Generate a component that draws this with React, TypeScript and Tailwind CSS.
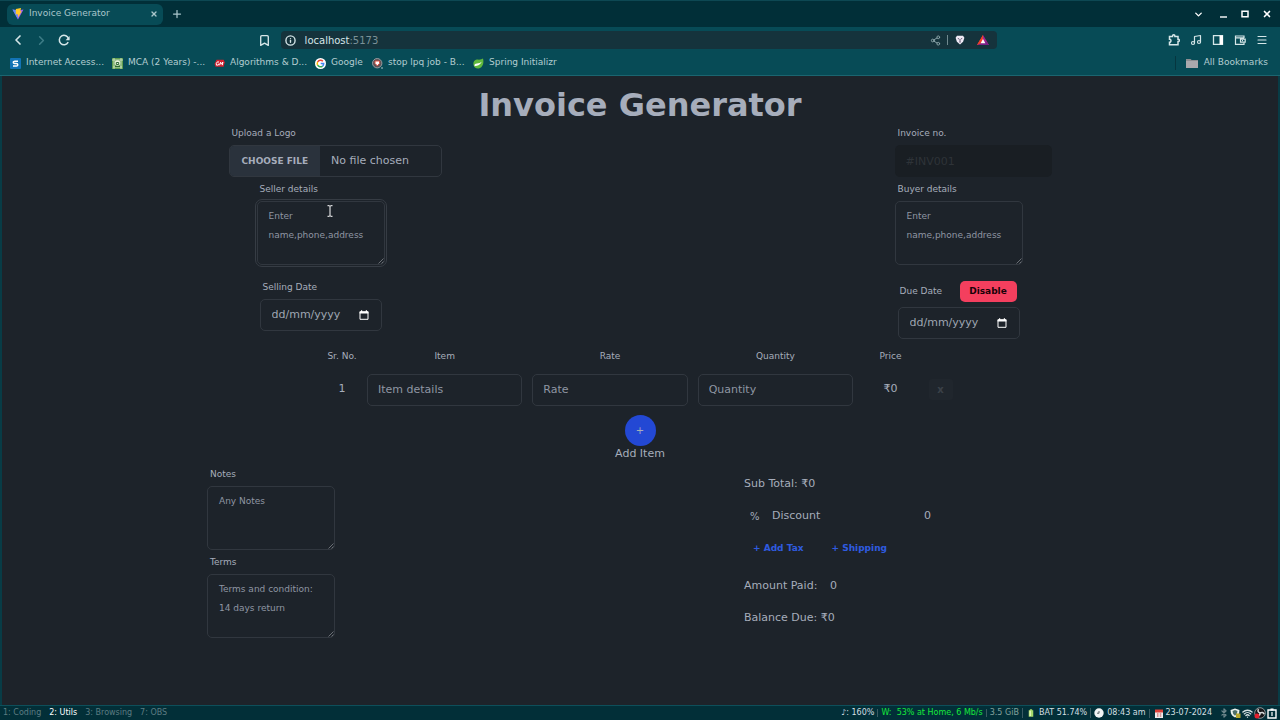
import type { ReactNode } from 'react'
import clsx from 'clsx'
import {
  Bluetooth,
  Bookmark,
  ChevronDown,
  ChevronLeft,
  ChevronRight,
  Info,
  Menu,
  Music,
  Plus,
  Share2,
  Wifi,
  X,
} from 'lucide-react'

const fieldBorder = 'rounded-[5px] border border-[#31373f]'

export default function App() {
  return (
    <div className="flex min-h-screen flex-col bg-[#1d232a] font-['DejaVu_Sans','Noto_Sans',sans-serif] text-[11px] text-[#a6adbb]">
      <TabStrip />
      <Toolbar />
      <Bookmarks />
      <main className="relative flex-1 border-x-2 border-[#083c46] pt-[13px]">
        <h1 className="text-center text-[32px] leading-8 font-bold">Invoice Generator</h1>
        <Details />
        <Items />
        <Summary />
        <TextCursor />
      </main>
      <StatusBar />
    </div>
  )
}

const TabStrip = () => (
  <div className="flex h-[27px] items-center border-t border-[#0d4853] bg-[#012f38] px-[7px] text-[9px] text-[#a9c6cb]">
    <div className="flex h-[21px] w-[156px] items-center rounded-md bg-[#074b56] px-[5px]">
      <ViteLogo />
      <span className="ml-[5px] flex-1">Invoice Generator</span>
      <button aria-label="Close tab">
        <X size={8} strokeWidth={4} />
      </button>
    </div>
    <button aria-label="New tab" className="ml-2">
      <Plus size={12} strokeWidth={2.5} />
    </button>
    <div className="ml-auto flex items-center gap-3 text-white">
      <button aria-label="Search tabs" className="mr-0.5">
        <ChevronDown size={11} strokeWidth={3} />
      </button>
      <button aria-label="Minimize">
        <svg viewBox="0 0 10 10" className="size-2.5">
          <path d="M2 8h7" stroke="currentColor" strokeWidth="1.4" />
        </svg>
      </button>
      <button aria-label="Maximize">
        <svg viewBox="0 0 10 10" className="size-2.5">
          <path d="M2 2.2h6v5.6h-6z" fill="none" stroke="currentColor" strokeWidth="1.5" />
        </svg>
      </button>
      <button aria-label="Close window" className="mr-px">
        <X size={10} strokeWidth={4} />
      </button>
    </div>
  </div>
)

const Toolbar = () => (
  <div className="flex h-[26px] items-center bg-[#074b56] text-[#d5e6e8]">
    <div className="flex flex-1 items-center gap-2 pl-2.5">
      <button aria-label="Back">
        <ChevronLeft size={16} strokeWidth={2.5} />
      </button>
      <button aria-label="Forward" className="text-[#3d7c86]">
        <ChevronRight size={15} strokeWidth={2.5} />
      </button>
      <button aria-label="Reload">
        <svg viewBox="0 0 14 14" className="size-3.5" fill="none" stroke="currentColor" strokeWidth="1.5">
          <path d="M11.2 9.2A4.7 4.7 0 1 1 11.6 6" />
          <path d="M12.6 3v4.2H8.6z" fill="currentColor" stroke="none" />
        </svg>
      </button>
      <button aria-label="Bookmark this page" className="mr-2.5 ml-auto">
        <Bookmark size={13} strokeWidth={2.5} />
      </button>
    </div>
    <div className="flex h-[18px] w-[56%] items-center rounded-sm bg-[#15333c] px-1">
      <Info size={11} strokeWidth={3} />
      <span className="ml-[9px] flex-1 text-[10px]">
        localhost<span className="text-[#7b9197]">:5173</span>
      </span>
      <Share2 size={11} className="text-[#8fa9ad]" />
      <span className="mx-1.5 h-2.5 w-px bg-[#70898f]" />
      <svg viewBox="0 0 10 10" className="mr-1 ml-px size-2.5">
        <path d="M2 .8h6l1.4 2-1.3 4L5 9.6 1.9 6.8.6 2.8z" fill="#eee9f5" />
        <path d="M2.8 3.4l1.4.6M7.2 3.4L5.8 4M5 4v2M4 6.5l1 .8 1-.8" stroke="#534763" strokeWidth=".9" fill="none" />
      </svg>
      <svg viewBox="0 0 12 10" className="mr-1 ml-2 h-2.5 w-3">
        <path d="M6 0L0 10h6V5z" fill="#ff4724" />
        <path d="M6 0l6 10H6V5z" fill="#a3268f" />
        <path d="M0 10h12L9 6.500H3z" fill="#7a2087" />
        <path d="M6 0L0 10l3.600-1.500L6 4z" fill="#f0402b" />
        <path d="M6 4L3.600 8.300h4.800z" fill="#fff" />
      </svg>
    </div>
    <div className="flex flex-1 items-center justify-end gap-2.5 pr-3">
      <button aria-label="Extensions">
        <svg viewBox="0 0 12 12" className="size-3" fill="none" stroke="currentColor" strokeWidth="1.5">
          <path d="M1.500 2.500h3V2a1.200 1.200 0 0 1 2.400 0v.5H10v2.800h.3a1.100 1.100 0 0 1 0 2.200H10v3.300H1.500V8.300a1.500 1.500 0 0 0 0-3z" />
        </svg>
      </button>
      <button aria-label="Media controls">
        <Music size={12} strokeWidth={2.4} />
      </button>
      <button aria-label="Side panel">
        <svg viewBox="0 0 12 12" className="size-3">
          <path d="M1.500 1.700h9v8.600h-9z" fill="none" stroke="currentColor" strokeWidth="1.300" />
          <path d="M7.500 1.500h3.500v9H7.500z" fill="#fff" />
        </svg>
      </button>
      <button aria-label="Wallet">
        <svg viewBox="0 0 12 12" className="size-3" fill="none" stroke="currentColor" strokeWidth="1.200">
          <path d="M10 4V2H1.500v8.300H10V8.500" />
          <path d="M1.500 3.800H10M6.500 5.200h4.700v3H6.500z" />
          <path d="M8 6.700h1" />
        </svg>
      </button>
      <button aria-label="Menu">
        <Menu size={12} strokeWidth={2.2} />
      </button>
    </div>
  </div>
)

const Bookmarks = () => (
  <nav className="flex h-[23px] items-center border-b border-[#1b6570] bg-[#074b56] pb-0.5 pl-2.5 text-[9px] whitespace-nowrap text-[#b3cdd1]">
    <BookmarkLink className="w-[102px]" label="Internet Access...">
      <rect width="11" height="11" rx="1" fill="#1273b5" />
      <path d="M8 3.200H4.800Q3.300 3.200 3.300 4.400T4.800 5.500h1.500Q7.800 5.500 7.800 6.800T6.300 8H3" fill="none" stroke="#fff" strokeWidth="1.400" />
    </BookmarkLink>
    <BookmarkLink className="w-[102px]" label="MCA (2 Years) -...">
      <rect width="11" height="11" fill="#5f9d4f" />
      <path d="M0 2h11M1 9h9M2 0v11M9 0v11" stroke="#dcebd0" strokeWidth=".8" />
      <circle cx="5.500" cy="5" r="2.800" fill="#e9f1dc" />
      <path d="M3 8.500h5M4.300 4.500h2.400v2H4.300z" fill="none" stroke="#2d6a34" strokeWidth="1" />
    </BookmarkLink>
    <BookmarkLink className="w-[101px]" label="Algorithms & D...">
      <path d="M2.500 1.800h7.200l1 2.500-1 4.500H1.500L.5 6z" fill="#d2202f" />
      <path d="M5 4Q3 3 2.300 5.500T4.500 7L5 5.500M5.600 7.200l1-3 .7 2 1.600-2.200-.6 3.200" fill="none" stroke="#fff" strokeWidth="1" />
    </BookmarkLink>
    <BookmarkLink className="w-[57px]" label="Google">
      <circle cx="5.500" cy="5.500" r="5.500" fill="#fff" />
      <g fill="none" strokeWidth="1.500">
        <path d="M7.900 3.200A3.300 3.300 0 0 0 2.600 4" stroke="#ea4335" />
        <path d="M2.600 4a3.300 3.300 0 0 0 0 3.100" stroke="#fbbc05" />
        <path d="M2.600 7.100a3.300 3.300 0 0 0 5 1" stroke="#34a853" />
        <path d="M7.600 8.100a3.300 3.300 0 0 0 1.100-2.500h-3" stroke="#4285f4" />
      </g>
    </BookmarkLink>
    <BookmarkLink className="w-[101px]" label="stop lpq job - B...">
      <circle cx="5.200" cy="5.200" r="4.700" fill="#5b5358" stroke="#a0a2a6" strokeWidth=".9" />
      <path d="M3 3h4.600v2.300L5.300 8 3 5.300z" fill="#fff" stroke="#d94c3c" strokeWidth="1" />
      <circle cx="10" cy="10" r=".8" fill="#c7d5d8" />
    </BookmarkLink>
    <BookmarkLink label="Spring Initializr">
      <path d="M10 .5Q8.500 1.800 5 1.600C1.500 1.600.2 4 .4 6.500.6 9 2.800 10.700 5.500 10.500 9 10.300 11.400 6 10 .5z" fill="#5fb83c" />
      <path d="M1.600 8.200Q6.800 8 8.800 3.800 7 5.400 4 5.600T1.600 8.200z" fill="#fff" />
    </BookmarkLink>
    <a href="#" className="ml-auto flex items-center gap-1.5 border-l border-[#06363f] pr-3 pl-2.5">
      <svg viewBox="0 0 12 10" className="h-2.5 w-3">
        <path d="M0 1h4.500l1.200 1H12v8H0z" fill="#8c8d91" />
        <path d="M0 3h12v7H0z" fill="#aaa9ad" />
      </svg>
      All Bookmarks
    </a>
  </nav>
)

const BookmarkLink = (props: { label: string; className?: string; children: ReactNode }) => (
  <a href="#" className={clsx('flex shrink-0 items-center gap-[5px]', props.className)}>
    <svg viewBox="0 0 11 11" className="size-[11px] shrink-0">
      {props.children}
    </svg>
    {props.label}
  </a>
)

const ViteLogo = () => (
  <svg viewBox="0 0 12 12" className="size-3">
    <path d="M.5 1.500L6 11.500l5.500-10L6 2.500z" fill="#a45df0" />
    <path d="M.5 1.500L6 11.500 5 2.300z" fill="#5f8df5" />
    <path d="M3.800 1L9 0 8.400 3.200h1.300L6 9.500 5.700 6 3.800 6.500z" fill="#ffc928" />
  </svg>
)

const Label = (props: { htmlFor: string; className?: string; children: ReactNode }) => (
  <label htmlFor={props.htmlFor} className={clsx('my-1 block h-4 px-[3px] text-[9px] leading-4', props.className)}>
    {props.children}
  </label>
)

const TextArea = (props: { id: string; placeholder: string; focused?: boolean }) => (
  <div className="relative h-16 w-32">
    <textarea
      id={props.id}
      placeholder={props.placeholder}
      className={clsx(
        'block size-full resize-none px-[11px] py-[5px] text-[9px] leading-[19px] outline-[#363c44] placeholder:text-[#8f96a3]',
        fieldBorder,
        props.focused && 'outline-1 outline-offset-1',
      )}
    />
    <svg viewBox="0 0 6 6" className="absolute right-px bottom-px size-1.5 text-[#8c9096]">
      <path d="M.5 5.500l5-5M3.500 5.500l2-2" stroke="currentColor" strokeWidth=".7" />
    </svg>
  </div>
)

const DateField = ({ id }: { id: string }) => (
  <div className={clsx('ml-[3px] flex h-8 w-[122px] items-center px-[11px]', fieldBorder)}>
    <input id={id} type="text" placeholder="dd/mm/yyyy" className="w-0 flex-1 outline-none placeholder:text-[#9fa6b3]" />
    <button aria-label="Open calendar" className="mr-px text-white">
      <svg viewBox="0 0 10 10" className="size-2.5">
        <path d="M1 1.800h8v7.500H1z" fill="none" stroke="currentColor" strokeWidth="1" />
        <path d="M.6 1.500h8.800v2H.6zM2 .3h1.200v1.500H2zM6.800.3H8v1.500H6.800z" fill="currentColor" />
      </svg>
    </button>
  </div>
)

const Details = () => (
  <div className="mx-auto flex w-full max-w-[823px] justify-between">
    <section>
      <Label htmlFor="logo">Upload a Logo</Label>
      <input
        id="logo"
        type="file"
        className={clsx(
          'block h-8 w-[213px] overflow-hidden leading-[30px] file:mr-[11px] file:h-full file:bg-[#2a323c] file:px-3 file:text-[9px] file:font-bold file:uppercase',
          fieldBorder,
        )}
      />
      <div className="ml-7">
        <Label htmlFor="seller">Seller details</Label>
        <TextArea id="seller" placeholder="Enter name,phone,address" focused />
        <Label htmlFor="selling-date" className="mt-3.5 ml-[3px]">
          Selling Date
        </Label>
        <DateField id="selling-date" />
      </div>
    </section>
    <section className="w-[157px]">
      <Label htmlFor="invoice-no">Invoice no.</Label>
      <input
        id="invoice-no"
        disabled
        placeholder="#INV001"
        className="block h-8 w-full rounded-[5px] bg-[#191e23] px-[11px] placeholder:text-[#2e3338]"
      />
      <Label htmlFor="buyer">Buyer details</Label>
      <TextArea id="buyer" placeholder="Enter name,phone,address" />
      <div className="mt-4 mb-[5px] flex w-[122px] items-center justify-between pl-[5px] text-[9px]">
        <label htmlFor="due-date">Due Date</label>
        <button className="h-[21px] w-[57px] rounded-[5px] bg-[#f43f5e] font-bold text-[#190208]">Disable</button>
      </div>
      <DateField id="due-date" />
    </section>
  </div>
)

const columns = ['Item', 'Rate', 'Quantity']
const placeholders = ['Item details', 'Rate', 'Quantity']

const Items = () => (
  <div className="mt-1.5 flex flex-col items-center">
    <table className="w-[636px] table-fixed text-center">
      <thead className="h-[23px] text-[9px]">
        <tr>
          <th className="w-10 font-normal whitespace-nowrap">Sr. No.</th>
          {columns.map((column) => (
            <th key={column} className="font-normal">
              {column}
            </th>
          ))}
          <th className="w-[65px] font-normal">Price</th>
          <th className="w-[35px]" aria-label="Remove" />
        </tr>
      </thead>
      <tbody>
        <tr className="h-[43px]">
          <td>1</td>
          {placeholders.map((placeholder) => (
            <td key={placeholder} className="px-[5px]">
              <input
                aria-label={placeholder}
                placeholder={placeholder}
                className={clsx('block h-8 w-full px-2.5 placeholder:text-[#8f96a3]', fieldBorder)}
              />
            </td>
          ))}
          <td>₹0</td>
          <td>
            <button disabled className="h-[21px] w-6 rounded-[3px] bg-[#20262d] text-[10px] font-bold text-[#3b4148]">
              x
            </button>
          </td>
        </tr>
      </tbody>
    </table>
    <button id="add-item" className="mt-1 size-[31px] rounded-full bg-[#2348d4] text-[10px]">
      +
    </button>
    <label htmlFor="add-item" className="leading-4">
      Add Item
    </label>
  </div>
)

const Summary = () => (
  <div className="mx-auto flex w-full max-w-[866px] justify-between">
    <section>
      <Label htmlFor="notes">Notes</Label>
      <TextArea id="notes" placeholder="Any Notes" />
      <Label htmlFor="terms">Terms</Label>
      <TextArea id="terms" placeholder="Terms and condition: 14 days return" />
    </section>
    <section className="w-[329px] pt-1.5">
      <p className="leading-8">Sub Total: ₹0</p>
      <div className="flex h-8 items-center pl-1.5">
        <button aria-label="Discount type" className="w-[22px] text-left text-[10px]">
          %
        </button>
        <label htmlFor="discount">Discount</label>
        <input id="discount" defaultValue="0" className="ml-auto w-[149px] outline-none" />
      </div>
      <div className="mb-1 flex h-[34px] items-center gap-7 pl-[9px] text-[9px] font-bold text-[#2f5be0]">
        <button>+ Add Tax</button>
        <button>+ Shipping</button>
      </div>
      <div className="flex h-8 items-center">
        <label htmlFor="paid" className="w-[86px]">
          Amount Paid:
        </label>
        <input id="paid" defaultValue="0" className="w-20 outline-none" />
      </div>
      <p className="leading-8">Balance Due: ₹0</p>
    </section>
  </div>
)

// I-beam pointer hovering over the seller details
const TextCursor = () => (
  <svg viewBox="0 0 6 12" className="absolute top-[129px] left-[325px] h-3 w-1.5" aria-hidden>
    <path d="M.5.7h2L3 1.200 3.500.7h2M3 1v10M.5 11.300h2l.5-.5.5.5h2" fill="none" stroke="#fff" strokeWidth="1" />
  </svg>
)

const Segment = (props: { className?: string; children: ReactNode }) => (
  <span
    className={clsx(
      'flex items-center gap-[3px] border-l border-[#3a5a62] px-[3px] leading-2 whitespace-pre',
      props.className,
    )}
  >
    {props.children}
  </span>
)

const StatusBar = () => (
  <footer className="flex h-[15px] items-center border-t border-[#0d4f5a] bg-[#022f38] px-[3px] text-[8px] text-[#d3dfe1]">
    <div className="flex gap-2 text-[#5d7c82]">
      <span>1: Coding</span>
      <span className="text-white">2: Utils</span>
      <span>3: Browsing</span>
      <span>7: OBS</span>
    </div>
    <div className="ml-auto flex items-center">
      <Segment className="border-l-0">♪: 160%</Segment>
      <Segment className="text-[#17e83b]">{'W:  53% at Home, 6 Mb/s'}</Segment>
      <Segment className="text-[#84a29c]">3.5 GiB</Segment>
      <Segment>
        <svg viewBox="0 0 8 10" className="mx-0.5 h-2.5 w-1.5">
          <path d="M2.500 0h3v1.200H7V10H1V1.200h1.500z" fill="#a6d96b" />
          <path d="M2 2h2v7H2z" fill="#e2f5b5" />
        </svg>
        BAT 51.74%
      </Segment>
      <Segment>
        <svg viewBox="0 0 10 10" className="size-2.5">
          <circle cx="5" cy="5" r="4.700" fill="#f3f5f5" />
          <path d="M5 5.300V3M5 5.200H3" stroke="#384247" strokeWidth=".8" />
        </svg>
        08:43 am
      </Segment>
      <Segment className="pl-[5px]">
        <svg viewBox="0 0 8 9" className="h-[9px] w-2">
          <path d="M0 1h8v8H0z" fill="#eee" />
          <path d="M0 .5h8v3H0z" fill="#dc4038" />
          <path d="M2 5h1.500M4.800 5h1.500M2 7h1.500M4.800 7h1.500" stroke="#b44" strokeWidth="1" />
        </svg>
        23-07-2024
      </Segment>
    </div>
    <div className="ml-1 flex items-center gap-px">
      <Bluetooth size={10} strokeWidth={3} className="text-[#6e868b]" />
      <svg viewBox="0 0 11 10" className="h-2.5 w-[11px]">
        <path d="M5 .5l4.500 1.500Q9.500 7.500 5 9.500.5 7.500.5 2z" fill="#eef2ef" />
        <path d="M5 2l2.500 1Q7.500 6 5 7.700 2.500 6 2.500 3z" fill="#4f6f6b" />
        <path d="M6 5.500h4.500V10H6z" fill="#b7a52c" />
      </svg>
      <Wifi size={11} strokeWidth={3} />
      <svg viewBox="0 0 12 12" className="size-3">
        <circle cx="6" cy="6" r="5.300" fill="#171719" stroke="#aeb3b5" strokeWidth=".8" />
        <path d="M6 6Q3 5 4.500 2.200M6 6q3-1.500 4.200 1.200M6 6q.2 3-3 3" fill="none" stroke="#d7dada" strokeWidth="1.500" />
        <circle cx="3" cy="9" r="2.500" fill="#e2202d" />
      </svg>
      <svg viewBox="0 0 10 11" className="h-[11px] w-2.5">
        <path d="M1 2h8v8H1z" fill="none" stroke="#fff" strokeWidth="1.400" />
        <path d="M3.500.5h3v2h-3zM4.400 4h1.200v4H4.400z" fill="#fff" />
      </svg>
    </div>
  </footer>
)
